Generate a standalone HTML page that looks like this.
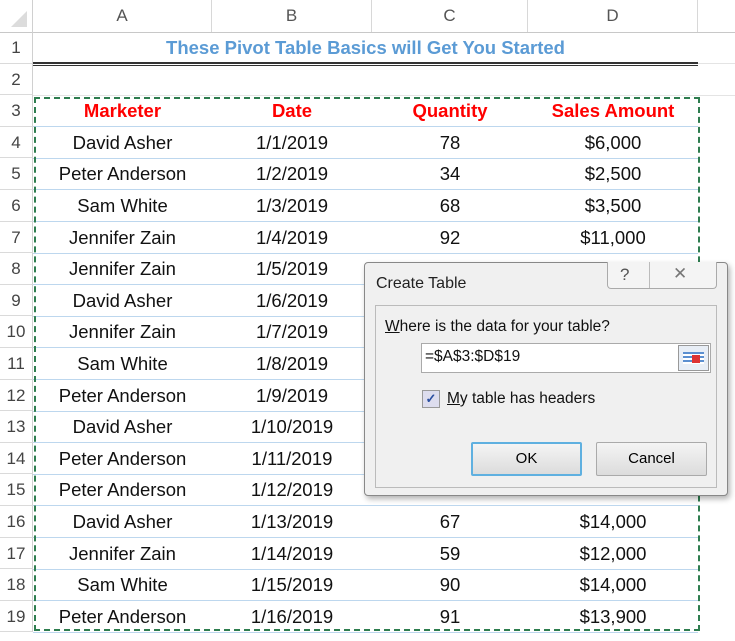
<!DOCTYPE html>
<html><head><style>
body{margin:0;width:735px;height:641px;overflow:hidden;background:#fff;font-family:"Liberation Sans",sans-serif;position:relative}
.abs{position:absolute}
.ch{position:absolute;top:0;height:32px;line-height:32px;text-align:center;color:#555;font-size:17px;border-right:1px solid #d8d8d8;box-sizing:border-box}
.rn{position:absolute;left:0;width:33px;text-align:center;color:#444;font-size:17px;border-right:1px solid #d0d0d0;box-sizing:border-box}
.c{position:absolute;text-align:center;font-size:18.5px;color:#111;white-space:nowrap}
.h{color:#f00;font-weight:bold}
.btn{position:absolute;border:1px solid #aaa;background:linear-gradient(#f4f4f4,#dcdcdc);text-align:center;font-size:15px;border-radius:2px}
</style></head><body>
<div class="abs" style="left:0;top:0;width:735px;height:32px;background:#fff;border-bottom:1px solid #c8c8c8"></div>
<div class="abs" style="left:0;top:0;width:33px;height:32px;border-right:1px solid #d0d0d0;box-sizing:border-box"><div style="position:absolute;right:5px;bottom:5px;width:0;height:0;border-left:16px solid transparent;border-bottom:16px solid #dcdcdc"></div></div>
<div class="ch" style="left:33px;width:179px">A</div>
<div class="ch" style="left:212px;width:160px">B</div>
<div class="ch" style="left:372px;width:156px">C</div>
<div class="ch" style="left:528px;width:170px">D</div>
<div id="g"></div>
<script>
var rows=[
["Marketer","Date","Quantity","Sales Amount"],
["David Asher","1/1/2019","78","$6,000"],
["Peter Anderson","1/2/2019","34","$2,500"],
["Sam White","1/3/2019","68","$3,500"],
["Jennifer Zain","1/4/2019","92","$11,000"],
["Jennifer Zain","1/5/2019","",""],
["David Asher","1/6/2019","",""],
["Jennifer Zain","1/7/2019","",""],
["Sam White","1/8/2019","",""],
["Peter Anderson","1/9/2019","",""],
["David Asher","1/10/2019","",""],
["Peter Anderson","1/11/2019","",""],
["Peter Anderson","1/12/2019","",""],
["David Asher","1/13/2019","67","$14,000"],
["Jennifer Zain","1/14/2019","59","$12,000"],
["Sam White","1/15/2019","90","$14,000"],
["Peter Anderson","1/16/2019","91","$13,900"]];
var cols=[[33,179],[212,160],[372,156],[528,170]];
var h="";
for(var n=1;n<=19;n++){var t=32+(n-1)*31.6;
h+='<div class="rn" style="top:'+t+'px;height:31.6px;line-height:31.6px;border-bottom:1px solid #dadada">'+n+'</div>';
if(n>=3){h+='<div class="abs" style="left:33px;width:665px;top:'+(t+31)+'px;height:1px;background:#bdd7ee"></div>';
var r=rows[n-3];for(var i=0;i<4;i++)h+='<div class="c'+(n==3?' h':'')+'" style="left:'+cols[i][0]+'px;width:'+cols[i][1]+'px;top:'+t+'px;line-height:31.6px">'+r[i]+'</div>';}
else h+='<div class="abs" style="left:33px;width:702px;top:'+(t+31)+'px;height:1px;background:#e4e4e4"></div>';}
document.getElementById('g').innerHTML=h;
</script>
<div class="c" style="left:33px;width:665px;top:32px;line-height:32px;color:#5b9bd5;font-weight:bold;font-size:18.5px">These Pivot Table Basics will Get You Started</div>
<div class="abs" style="left:33px;width:665px;top:62px;height:1px;border-top:2px solid #333;border-bottom:1px solid #333;height:1px"></div>
<div class="abs" style="left:34px;top:97px;width:662px;height:530px;border:2px dashed #2e7d4f"></div>
<div class="abs" style="left:364px;top:262px;width:362px;height:232px;background:#f0f0f0;border:1px solid #888;border-radius:4px;box-shadow:2px 3px 6px rgba(0,0,0,.3)">
 <div class="abs" style="left:11px;top:12px;font-size:16px;color:#222">Create Table</div>
 <div class="abs" style="left:242px;top:-1px;width:108px;height:26px;border:1px solid #aaa;border-top:none;border-radius:0 0 4px 4px;background:#f4f4f4"></div>
 <div class="abs" style="left:284px;top:-1px;width:1px;height:26px;background:#bbb"></div>
 <div class="abs" style="left:255px;top:2px;font-size:17px;color:#555">?</div>
 <div class="abs" style="left:308px;top:1px;font-size:17px;color:#777">✕</div>
 <div class="abs" style="left:10px;top:42px;width:340px;height:181px;border:1px solid #bbb;background:#f0f0f0"></div>
 <div class="abs" style="left:20px;top:55px;font-size:15.5px;color:#111"><u>W</u>here is the data for your table?</div>
 <div class="abs" style="left:56px;top:80px;width:288px;height:28px;background:#fff;border:1px solid #aaa"></div>
 <div class="abs" style="left:60px;top:85px;font-size:15.5px;color:#111">=$A$3:$D$19</div>
 <div class="abs" style="left:313px;top:82px;width:29px;height:24px;border:1px solid #999;background:#e8eef6"><div style="margin:6px 4px;width:21px;height:12px;background:repeating-linear-gradient(#5b8fd0 0 2px,#fff 2px 4px)"></div><div style="position:absolute;left:13px;top:9px;width:8px;height:8px;background:#d33"></div></div>
 <div class="abs" style="left:57px;top:127px;width:16px;height:16px;border:1px solid #999;background:#dde;font-size:13px;line-height:16px;text-align:center;color:#2a4fa0;font-weight:bold">✓</div>
 <div class="abs" style="left:82px;top:127px;font-size:15.5px;color:#111"><u>M</u>y table has headers</div>
 <div class="btn" style="left:106px;top:179px;width:107px;height:30px;line-height:30px;border:2px solid #5fb0e0">OK</div>
 <div class="btn" style="left:231px;top:179px;width:109px;height:32px;line-height:32px">Cancel</div>
</div>
</body></html>
